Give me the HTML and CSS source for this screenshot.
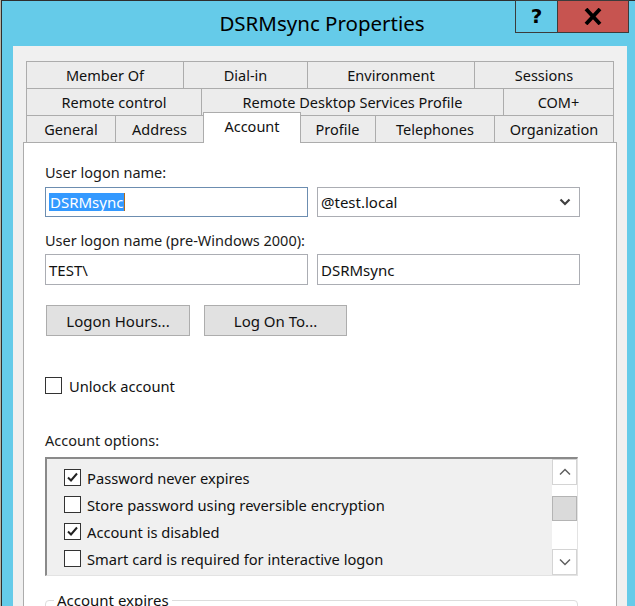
FILE: index.html
```html
<!DOCTYPE html>
<html lang="en">
<head>
  <meta charset="UTF-8" />
  <meta name="viewport" content="width=device-width, initial-scale=1.0"/>
  <title>DSRMsync Properties</title>
  <link rel="stylesheet" href="styles.css">
</head>
<body>

  <div class="window">

    <!-- Caption bar -->
    <div class="titlebar">
      <div class="title">DSRMsync Properties</div>
      <div class="caption-buttons">
        <div class="caption-btn help">?</div>
        <div class="caption-btn close">
          <svg width="18" height="17" viewBox="0 0 18 17">
            <path d="M2 1 L16 16 M16 1 L2 16" stroke="#000" stroke-width="3.8" fill="none"/>
          </svg>
        </div>
      </div>
    </div>

    <div class="client">

      <!-- Tab strip, three rows -->
      <div class="tabs">
        <div class="tab-row row-1">
          <div class="tab">Member Of</div>
          <div class="tab">Dial-in</div>
          <div class="tab">Environment</div>
          <div class="tab">Sessions</div>
        </div>
        <div class="tab-row row-2">
          <div class="tab">Remote control</div>
          <div class="tab">Remote Desktop Services Profile</div>
          <div class="tab">COM+</div>
        </div>
        <div class="tab-row row-3">
          <div class="tab">General</div>
          <div class="tab">Address</div>
          <div class="tab active">Account</div>
          <div class="tab">Profile</div>
          <div class="tab">Telephones</div>
          <div class="tab">Organization</div>
        </div>
      </div>

      <div class="panel">
        <div class="label">User logon name:</div>
        <div class="field-pair">
          <div class="textbox focused"><span class="selection">DSRMsync</span><span class="caret"></span></div>
          <div class="textbox combo">
            <span>@test.local</span>
            <svg width="12" height="8" viewBox="0 0 12 8">
              <polyline points="1.5,1.5 6,6 10.5,1.5" stroke="#404040" stroke-width="2.2" fill="none"/>
            </svg>
          </div>
        </div>

        <div class="label label-second">User logon name (pre-Windows 2000):</div>
        <div class="field-pair tall">
          <div class="textbox">TEST\</div>
          <div class="textbox">DSRMsync</div>
        </div>

        <div class="button-row">
          <div class="button logon-hours">Logon Hours...</div>
          <div class="button logon-to">Log On To...</div>
        </div>

        <div class="check-line unlock">
          <span class="checkbox"></span>
          <span>Unlock account</span>
        </div>

        <div class="label label-options">Account options:</div>
        <div class="listbox">
          <div class="list-items">
            <div class="check-line item">
              <span class="checkbox">
                <svg width="15" height="15" viewBox="0 0 15 15"><polyline points="3,7.5 6,10.5 12,3.5" stroke="#222" stroke-width="2" fill="none"/></svg>
              </span>
              <span>Password never expires</span>
            </div>
            <div class="check-line item">
              <span class="checkbox"></span>
              <span>Store password using reversible encryption</span>
            </div>
            <div class="check-line item">
              <span class="checkbox">
                <svg width="15" height="15" viewBox="0 0 15 15"><polyline points="3,7.5 6,10.5 12,3.5" stroke="#222" stroke-width="2" fill="none"/></svg>
              </span>
              <span>Account is disabled</span>
            </div>
            <div class="check-line item">
              <span class="checkbox"></span>
              <span>Smart card is required for interactive logon</span>
            </div>
          </div>
          <div class="scrollbar">
            <div class="scroll-btn">
              <svg width="12" height="8" viewBox="0 0 12 8"><polyline points="1,6.5 6,1.5 11,6.5" stroke="#606060" stroke-width="1.5" fill="none"/></svg>
            </div>
            <div class="scroll-track">
              <div class="scroll-thumb"></div>
            </div>
            <div class="scroll-btn">
              <svg width="12" height="8" viewBox="0 0 12 8"><polyline points="1,1.5 6,6.5 11,1.5" stroke="#606060" stroke-width="1.5" fill="none"/></svg>
            </div>
          </div>
        </div>

        <fieldset class="group">
          <legend>Account expires</legend>
        </fieldset>
      </div>

    </div>
  </div>

</body>
</html>
```

FILE: styles.css
```css
* {
  box-sizing: border-box;
  margin: 0;
  padding: 0;
}

body {
  background-color: #b9b4a4;
  font-family: 'Noto Sans', 'Open Sans', sans-serif;
  color: #1a1a1a;
  overflow: hidden;
}

.window {
  margin-left: 1px;
  height: 606px;
  background-color: #65cbe9;
  border-left: 1px solid #2e2e2e;
  border-top: 1px solid #2e2e2e;
  padding-left: 11px;
  padding-right: 8px;
}

/* caption bar */
.titlebar {
  position: relative;
  height: 45px;
  display: flex;
  align-items: center;
  justify-content: center;
}

.title {
  font-size: 20.5px;
  color: #000;
  margin-top: -2px;
  margin-left: 4px;
}

.caption-buttons {
  position: absolute;
  top: -1px;
  right: -2px;
  display: flex;
}

.caption-btn {
  height: 33px;
  border: 1px solid #3b3b3b;
  display: flex;
  align-items: center;
  justify-content: center;
}

.caption-btn.help {
  width: 43px;
  font-family: 'DejaVu Sans', sans-serif;
  font-weight: bold;
  font-size: 20px;
  color: #000;
  padding-bottom: 2px;
}

.caption-btn.close {
  width: 72px;
  margin-left: -1px;
  background-color: #c75450;
}

/* dialog body */
.client {
  background-color: #f0f0f0;
  height: 560px;
  padding-top: 15px;
  padding-left: 10px;
  overflow: hidden;
}

.tabs {
  margin-left: 3px;
  width: 588px;
}

.tab-row {
  display: grid;
  height: 27px;
}

.row-1 { grid-template-columns: 157px 124px 167px 1fr; }
.row-2 { grid-template-columns: 175px 302px 1fr; }
.row-3 { grid-template-columns: 89px 88px 97px 75px 119px 1fr; }

.tab {
  border-top: 1px solid #acacac;
  border-left: 1px solid #acacac;
  background-color: #ececec;
  font-size: 14.5px;
  color: #111;
  display: flex;
  align-items: center;
  justify-content: center;
  white-space: nowrap;
}

.tab:last-child {
  border-right: 1px solid #acacac;
}

.tab.active {
  position: relative;
  z-index: 1;
  background-color: #fff;
  border-right: 1px solid #acacac;
  margin: -3px -1px -1px 0;
  padding-bottom: 4px;
}

.tab.active + .tab {
  border-left: none;
}

.panel {
  width: 594px;
  height: 470px;
  background-color: #fff;
  border: 1px solid #acacac;
  padding: 20px 0 0 21px;
}

.label {
  font-size: 14.5px;
  line-height: 18px;
  height: 18px;
}

.label-second {
  margin-top: 14px;
}

.label-options {
  margin-top: 37px;
}

.field-pair {
  display: grid;
  grid-template-columns: 263px 263px;
  column-gap: 9px;
  height: 30px;
  margin-top: 6px;
}

.field-pair.tall {
  height: 31px;
  margin-top: 5px;
}

.textbox {
  border: 1px solid #abadb3;
  background-color: #fff;
  font-size: 15px;
  color: #111;
  padding-left: 3px;
  display: flex;
  align-items: center;
}

.textbox.focused {
  border-color: #6c8db0;
}

.selection {
  background-color: #3399ff;
  color: #fff;
  line-height: 18px;
  padding: 0 1px;
}

.caret {
  width: 1px;
  height: 18px;
  background-color: #b06a1c;
}

.combo {
  justify-content: space-between;
  padding-right: 8px;
}

.button-row {
  display: flex;
  gap: 14px;
  margin-top: 20px;
  margin-left: 1px;
}

.button {
  height: 31px;
  background-color: #e1e1e1;
  border: 1px solid #adadad;
  font-size: 15px;
  color: #111;
  display: flex;
  align-items: center;
  justify-content: center;
}

.logon-hours { width: 144px; }
.logon-to { width: 143px; }

.check-line {
  display: flex;
  align-items: center;
  font-size: 14.7px;
  line-height: 18px;
  color: #111;
}

.checkbox {
  width: 17px;
  height: 17px;
  border: 1px solid #333;
  background-color: #fff;
  display: flex;
  align-items: center;
  justify-content: center;
}

.unlock {
  height: 17px;
  margin-top: 41px;
  gap: 7px;
}

/* account options list */
.listbox {
  display: flex;
  width: 533px;
  height: 119px;
  margin-top: 8px;
  background-color: #f0f0f0;
  border-top: 2px solid #8a8a8a;
  border-left: 2px solid #8a8a8a;
  border-bottom: 1px solid #e3e3e3;
  border-right: 1px solid #e3e3e3;
}

.list-items {
  flex: 1;
  padding: 5px 0 0 17px;
}

.item {
  height: 27px;
  gap: 6px;
}

.scrollbar {
  width: 25px;
  background-color: #fff;
  display: flex;
  flex-direction: column;
}

.scroll-btn {
  height: 26px;
  border: 1px solid #d4d4d4;
  display: flex;
  align-items: center;
  justify-content: center;
}

.scroll-track {
  flex: 1;
  padding-top: 11px;
}

.scroll-thumb {
  height: 25px;
  background-color: #dadada;
  border: 1px solid #b4b4b4;
}

.group {
  width: 533px;
  height: 40px;
  margin-top: 15px;
  border: 1px solid #dcdcdc;
  border-radius: 4px;
  padding-left: 8px;
}

.group legend {
  font-size: 15px;
  line-height: 18px;
  color: #111;
  padding: 0 3px;
}
```
